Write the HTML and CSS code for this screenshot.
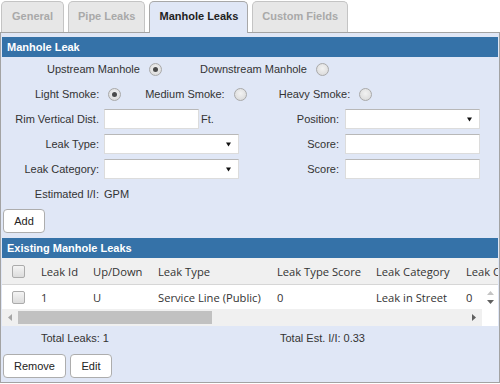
FILE: index.html
```html
<!DOCTYPE html>
<html>
<head>
    <title>Manhole Leaks</title>
    <link rel="stylesheet" href="styles.css">
</head>
<body>
    <div class="tabs">
        <div class="tab">General</div>
        <div class="tab">Pipe Leaks</div>
        <div class="tab active">Manhole Leaks</div>
        <div class="tab">Custom Fields</div>
    </div>

    <div class="panel">
        <div class="bar">Manhole Leak</div>

        <div class="form">
            <div class="radio-row">
                <span class="up">Upstream Manhole</span><span class="radio checked"></span>
                <span class="down">Downstream Manhole</span><span class="radio"></span>
            </div>
            <div class="radio-row">
                <span class="light">Light Smoke:</span><span class="radio checked"></span>
                <span class="medium">Medium Smoke:</span><span class="radio"></span>
                <span class="heavy">Heavy Smoke:</span><span class="radio"></span>
            </div>
            <div class="field-row">
                <span class="lbl">Rim Vertical Dist.</span>
                <div class="with-unit"><div class="input short"></div><span>Ft.</span></div>
                <span class="lbl right">Position:</span>
                <div class="select"><svg width="5" height="5" viewBox="0 0 5 5"><polygon points="0,0.5 5,0.5 2.5,4.5" fill="#111"/></svg></div>
            </div>
            <div class="field-row">
                <span class="lbl">Leak Type:</span>
                <div class="select"><svg width="5" height="5" viewBox="0 0 5 5"><polygon points="0,0.5 5,0.5 2.5,4.5" fill="#111"/></svg></div>
                <span class="lbl right">Score:</span>
                <div class="input"></div>
            </div>
            <div class="field-row">
                <span class="lbl">Leak Category:</span>
                <div class="select"><svg width="5" height="5" viewBox="0 0 5 5"><polygon points="0,0.5 5,0.5 2.5,4.5" fill="#111"/></svg></div>
                <span class="lbl right">Score:</span>
                <div class="input"></div>
            </div>
            <div class="field-row">
                <span class="lbl">Estimated I/I:</span>
                <span>GPM</span>
            </div>
        </div>

        <div class="actions add-row">
            <button>Add</button>
        </div>

        <div class="bar">Existing Manhole Leaks</div>

        <div class="grid">
            <div class="grid-head">
                <div class="cell c-chk"><span class="checkbox"></span></div>
                <div class="cell c-id">Leak Id</div>
                <div class="cell c-dir">Up/Down</div>
                <div class="cell c-type">Leak Type</div>
                <div class="cell c-score">Leak Type Score</div>
                <div class="cell c-cat">Leak Category</div>
                <div class="cell c-cat-score">Leak Category Score</div>
            </div>
            <div class="grid-body">
                <div class="grid-row">
                    <div class="cell c-chk"><span class="checkbox"></span></div>
                    <div class="cell c-id">1</div>
                    <div class="cell c-dir">U</div>
                    <div class="cell c-type">Service Line (Public)</div>
                    <div class="cell c-score">0</div>
                    <div class="cell c-cat">Leak in Street</div>
                    <div class="cell c-cat-score">0</div>
                </div>
                <div class="vscroll">
                    <svg width="7" height="4" viewBox="0 0 7 4"><polygon points="0,4 7,4 3.5,0" fill="#c4c4c4"/></svg>
                    <svg width="7" height="4" viewBox="0 0 7 4"><polygon points="0,0 7,0 3.5,4" fill="#606060"/></svg>
                </div>
            </div>
            <div class="hscroll">
                <div class="track">
                    <div class="arrow"><svg width="4" height="7" viewBox="0 0 4 7"><polygon points="4,0 4,7 0,3.5" fill="#a6a6a6"/></svg></div>
                    <div class="thumb"></div>
                    <div class="spacer"></div>
                    <div class="arrow"><svg width="4" height="7" viewBox="0 0 4 7"><polygon points="0,0 0,7 4,3.5" fill="#606060"/></svg></div>
                </div>
                <div class="corner"></div>
            </div>
        </div>

        <div class="totals">
            <span class="total-leaks">Total Leaks: 1</span>
            <span>Total Est. I/I: 0.33</span>
        </div>

        <div class="actions">
            <button>Remove</button>
            <button>Edit</button>
        </div>
    </div>
</body>
</html>
```

FILE: styles.css
```css
body {
    margin: 0;
    font-family: "Liberation Sans", Arial, sans-serif;
    font-size: 11px;
    color: #333;
    background: #fff;
}
.tabs {
    display: flex;
    gap: 4px;
    height: 31px;
    padding: 1px 0 0 1px;
}
.tab {
    box-sizing: border-box;
    height: 31px;
    min-width: 63px;
    padding: 0 9px;
    border: 1px solid #c4c4c4;
    border-bottom: none;
    border-radius: 5px 5px 0 0;
    background: #e7e7e7;
    color: #a9a9a9;
    font-weight: bold;
    line-height: 28px;
    text-align: center;
}
.tab.active {
    height: 32px;
    position: relative;
    z-index: 1;
    border-color: #a8a8a8;
    background: #e0e7f6;
    color: #222;
}
.panel {
    border: 1px solid #a3a3a3;
    background: #e0e7f6;
    padding: 4px 1px;
}
.bar {
    height: 20px;
    line-height: 20px;
    padding-left: 5px;
    background: #3572a8;
    color: #fff;
    font-weight: bold;
}
.form {
    display: flex;
    flex-direction: column;
    gap: 5px;
    padding-top: 2px;
}
.radio-row {
    display: flex;
    align-items: center;
    height: 20px;
}
.up { margin-left: 45px; }
.down { margin-left: 38px; }
.light { margin-left: 33px; }
.medium { margin-left: 24px; }
.heavy { margin-left: 32px; }
.radio {
    box-sizing: border-box;
    width: 13px;
    height: 13px;
    margin-left: 9px;
    border: 1px solid #a9a9a9;
    border-radius: 50%;
    background: radial-gradient(circle at 50% 40%, #f2f2f2, #d6d6d6);
    display: flex;
    align-items: center;
    justify-content: center;
}
.radio.checked::after {
    content: "";
    width: 5px;
    height: 5px;
    border-radius: 50%;
    background: #4a4a4a;
}
.field-row {
    display: grid;
    grid-template-columns: 102px 135px 106px 135px;
    align-items: center;
    height: 20px;
}
.lbl {
    text-align: right;
    padding-right: 5px;
}
.lbl.right {
    padding-right: 6px;
}
.input, .select {
    box-sizing: border-box;
    height: 20px;
    background: #fff;
    border: 1px solid #dcdcdc;
    border-top-color: #b8b8b8;
}
.select {
    display: flex;
    align-items: center;
    justify-content: flex-end;
    padding-right: 7px;
}
.with-unit {
    display: flex;
    align-items: center;
    gap: 2px;
}
.input.short {
    width: 95px;
}
.actions {
    display: flex;
    gap: 4px;
    padding-left: 1px;
}
.add-row {
    margin: 5px 0;
}
button {
    box-sizing: border-box;
    height: 24px;
    min-width: 42px;
    padding: 0 10px;
    border: 1px solid #adadad;
    border-radius: 4px;
    background: #fff;
    color: #222;
    font-family: "Liberation Sans", Arial, sans-serif;
    font-size: 11px;
}
.grid {
    font-family: "Open Sans", sans-serif;
    font-size: 11.2px;
    color: #333;
}
.grid-head {
    display: flex;
    height: 26px;
    align-items: center;
    background: #f0f0f0;
    border-bottom: 1px solid #d6d6d6;
    overflow: hidden;
    white-space: nowrap;
}
.grid-body {
    display: flex;
    height: 24px;
    background: #fff;
}
.grid-row {
    flex: 1;
    display: flex;
    align-items: center;
    overflow: hidden;
    white-space: nowrap;
}
.cell {
    flex: none;
    box-sizing: border-box;
    padding-left: 5px;
}
.c-chk { width: 34px; padding-left: 10px; display: flex; }
.c-id { width: 52px; }
.c-dir { width: 65px; }
.c-type { width: 119px; }
.c-score { width: 99px; }
.c-cat { width: 90px; }
.c-cat-score { width: 140px; }
.checkbox {
    box-sizing: border-box;
    width: 13px;
    height: 13px;
    border: 1px solid #ababab;
    border-radius: 2px;
    background: linear-gradient(#f4f4f4, #dcdcdc);
}
.vscroll {
    width: 16px;
    display: flex;
    flex-direction: column;
    align-items: center;
    justify-content: center;
    gap: 5px;
    background: #fff;
}
.hscroll {
    display: flex;
    height: 17px;
}
.track {
    flex: 1;
    display: flex;
    align-items: center;
    background: #f0f0f0;
}
.arrow {
    width: 16px;
    display: flex;
    justify-content: center;
}
.thumb {
    width: 194px;
    height: 13px;
    background: #c1c1c1;
}
.spacer {
    flex: 1;
}
.corner {
    width: 16px;
    background: #fff;
}
.totals {
    display: grid;
    grid-template-columns: 278px auto;
    align-items: center;
    height: 23px;
    margin-bottom: 5px;
}
.total-leaks {
    padding-left: 39px;
}
```
